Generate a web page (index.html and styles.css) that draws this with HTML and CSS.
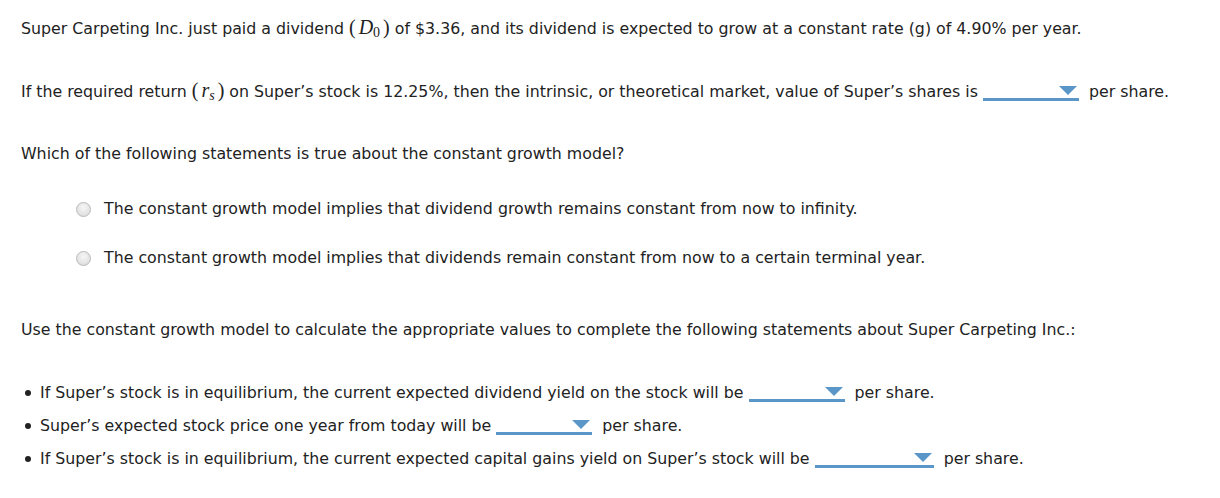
FILE: index.html
```html
<!DOCTYPE html>
<html>
<head>
<meta charset="utf-8">
<link rel="stylesheet" href="styles.css">
</head>
<body>
<div class="page">
  <p class="line l1">Super Carpeting Inc. just paid a dividend <span class="math">(<i class="mv">D</i><sub>0</sub><span class="ms"></span>)</span> of $3.36, and its dividend is expected to grow at a constant rate (g) of 4.90% per year.</p>
  <p class="line l2">If the required return <span class="math">(<i class="mv">r</i><sub><i>s</i></sub><span class="ms"></span>)</span> on Super’s stock is 12.25%, then the intrinsic, or theoretical market, value of Super’s shares is <span class="dd"><svg class="tri" width="18" height="9" viewBox="0 0 18 9"><path d="M0 0H18L9 9Z" fill="#5b96c8"/></svg></span> per share.</p>
  <p class="line l3">Which of the following statements is true about the constant growth model?</p>
  <div class="options">
    <label class="opt"><span class="radio"></span>The constant growth model implies that dividend growth remains constant from now to infinity.</label>
    <label class="opt"><span class="radio"></span>The constant growth model implies that dividends remain constant from now to a certain terminal year.</label>
  </div>
  <p class="line l4">Use the constant growth model to calculate the appropriate values to complete the following statements about Super Carpeting Inc.:</p>
  <ul class="bullets">
    <li><span class="dot"></span><span>If Super’s stock is in equilibrium, the current expected dividend yield on the stock will be <span class="dd"><svg class="tri" width="18" height="9" viewBox="0 0 18 9"><path d="M0 0H18L9 9Z" fill="#5b96c8"/></svg></span> per share.</span></li>
    <li><span class="dot"></span><span>Super’s expected stock price one year from today will be <span class="dd"><svg class="tri" width="18" height="9" viewBox="0 0 18 9"><path d="M0 0H18L9 9Z" fill="#5b96c8"/></svg></span> per share.</span></li>
    <li><span class="dot"></span><span>If Super’s stock is in equilibrium, the current expected capital gains yield on Super’s stock will be <span class="dd wide"><svg class="tri" width="18" height="9" viewBox="0 0 18 9"><path d="M0 0H18L9 9Z" fill="#5b96c8"/></svg></span> per share.</span></li>
  </ul>
</div>
</body>
</html>
```
FILE: styles.css
```css
html, body {
  margin: 0;
  padding: 0;
  background: #fff;
}
.page {
  padding: 17px 21px 0 21px;
  font-family: "DejaVu Sans", Verdana, sans-serif;
  font-size: 15.8px;
  line-height: 22px;
  color: #222;
}
.line {
  margin: 0;
  height: 22px;
  white-space: nowrap;
}
.l2 { margin-top: 41px; }
.l3 { margin-top: 41px; }
.math {
  font-family: "Liberation Serif", "DejaVu Serif", serif;
  font-size: 20px;
  line-height: 1;
}
.math .mv {
  font-style: italic;
  margin-left: 3px;
}
.math sub {
  font-size: 14px;
  vertical-align: -3px;
  line-height: 0;
}
.math .ms {
  display: inline-block;
  width: 3px;
}
.options {
  display: flex;
  flex-direction: column;
  gap: 27px;
  margin-top: 33px;
  padding-left: 55px;
}
.opt {
  display: flex;
  align-items: center;
  gap: 13px;
  height: 22px;
  white-space: nowrap;
}
.radio {
  width: 15px;
  height: 15px;
  border-radius: 50%;
  box-sizing: border-box;
  border: 1px solid #b9b9b9;
  background: radial-gradient(circle at 50% 35%, #f6f6f6 0%, #e4e4e4 60%, #d6d6d6 100%);
  flex: none;
}
.l4 { margin-top: 50px; }
.bullets {
  list-style: none;
  margin: 41px 0 0 0;
  padding: 0;
  display: flex;
  flex-direction: column;
  gap: 11px;
}
.bullets li {
  display: flex;
  align-items: center;
  height: 22px;
  white-space: nowrap;
}
.dot {
  width: 6px;
  height: 6px;
  border-radius: 50%;
  background: #222;
  margin: 0 9px 0 4px;
  flex: none;
}
.dd {
  display: inline-block;
  box-sizing: border-box;
  width: 96px;
  height: 18px;
  border-bottom: 3px solid #5b96c8;
  vertical-align: -4px;
  overflow: hidden;
  margin-right: 5px;
}
.dd.wide { width: 119px; }
.tri {
  display: block;
  margin: 3px 2px 0 auto;
}
```
